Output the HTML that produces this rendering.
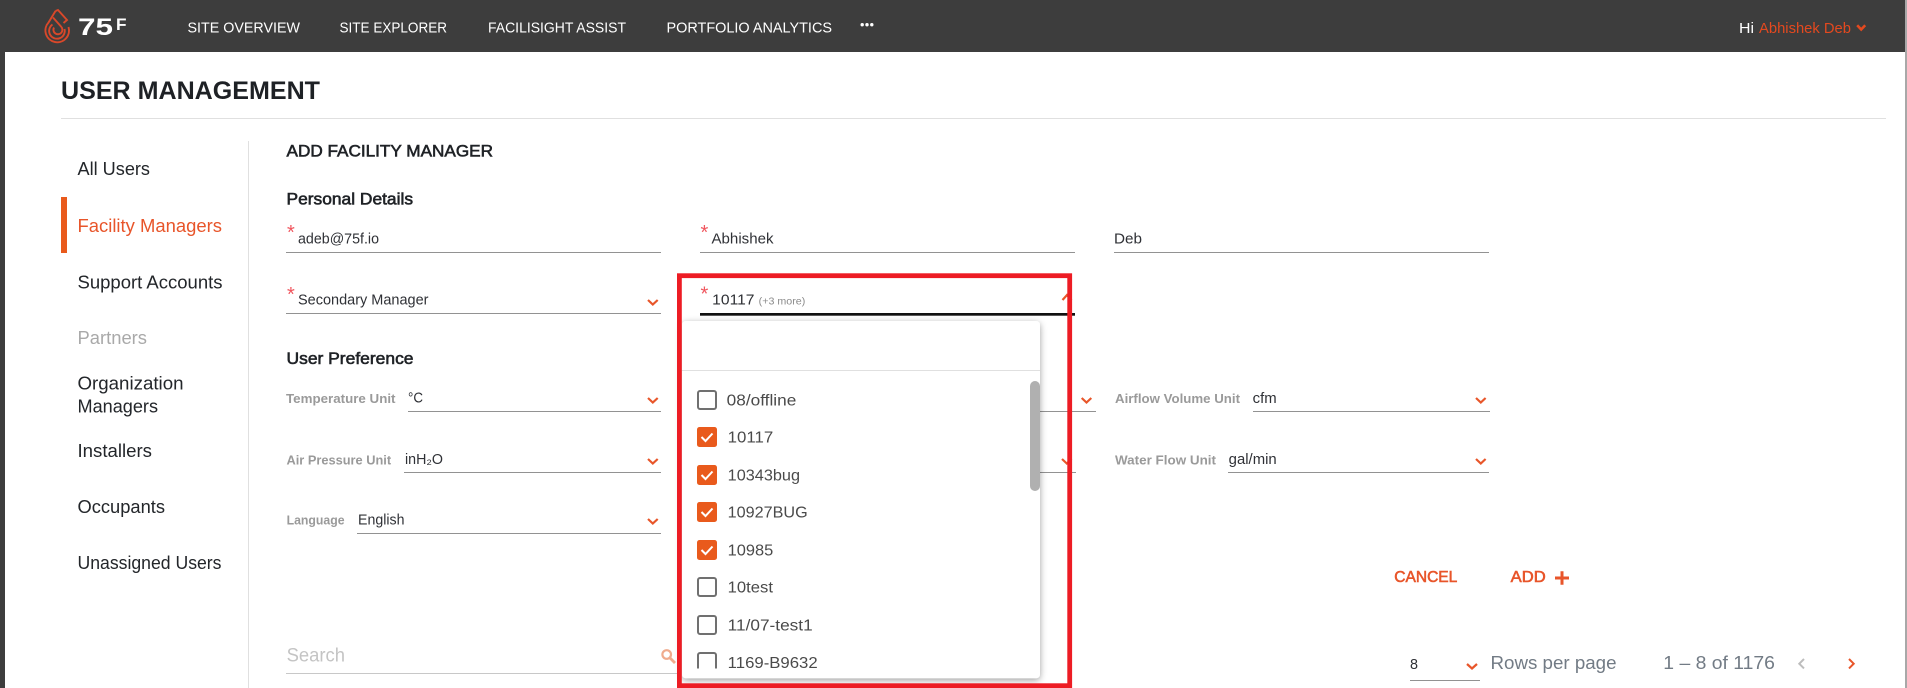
<!DOCTYPE html>
<html lang="en">
<head>
<meta charset="utf-8">
<title>User Management</title>
<style>
html,body{margin:0;padding:0;width:1907px;height:688px;overflow:hidden;background:#fff}
svg{display:block}
text{font-family:"Liberation Sans","Noto Sans CJK JP",sans-serif;white-space:pre}
.nav{font-size:15px;fill:#fff}
.side{font-size:18px;fill:#23262a}
.val{font-size:14.5px;fill:#2f3136}
.lab{font-size:13px;font-weight:bold;fill:#9a9a9a}
.h{font-size:16.5px;fill:#1f2226;stroke:#1f2226;stroke-width:.6}
.ast{font-size:20px;fill:#f0565e}
.opt{font-size:15.5px;fill:#4a4a4a}
.pg{font-size:18px;fill:#727b85}
.btn{font-size:15.5px;fill:#e8552a;stroke:#e8552a;stroke-width:.6}
.ch{fill:none;stroke:#e8562a;stroke-width:2.2}
.ln{fill:#929292}
.cb{fill:#fff;stroke:#707070;stroke-width:2}
.cbon{fill:#e95a1c}
.tick{fill:none;stroke:#fff;stroke-width:2}
</style>
</head>
<body>
<svg width="1907" height="688" viewBox="0 0 1907 688" xmlns="http://www.w3.org/2000/svg">
<defs>
<clipPath id="listclip"><rect x="682" y="371" width="358" height="297.5"/></clipPath>
<filter id="sh" x="-10%" y="-10%" width="120%" height="120%"><feDropShadow dx="0" dy="2" stdDeviation="3.5" flood-color="#000" flood-opacity=".38"/></filter>
</defs>

<!-- chrome -->
<rect x="0" y="0" width="1907" height="52" fill="#3d3d3d"/>
<rect x="0" y="0" width="5" height="688" fill="#3d3d3d"/>
<rect x="1905" y="0" width="2" height="688" fill="#a8a8a8"/>

<!-- logo -->
<g fill="none" stroke="#d9482a" stroke-width="1.9">
<path d="M55.500 11L48.500 22.500A11.800 11.800 0 1 0 68.500 27"/>
<path d="M55.500 11L58 10L67 20L63.500 23"/>
<path d="M52.500 24.500A7.800 7.800 0 1 0 64.500 29"/>
<path d="M53 17.500L61 26.500A4.500 4.500 0 1 1 54 27.500"/>
</g>
<text x="78" y="35" font-size="24" font-weight="bold" fill="#fff" textLength="35" lengthAdjust="spacingAndGlyphs">75</text>
<text x="116" y="30" font-size="17" font-weight="bold" fill="#fff" textLength="10.500" lengthAdjust="spacingAndGlyphs">F</text>

<!-- nav -->
<text class="nav" x="187.500" y="32.500" textLength="112.500" lengthAdjust="spacingAndGlyphs">SITE OVERVIEW</text>
<text class="nav" x="339.500" y="32.500" textLength="107.500" lengthAdjust="spacingAndGlyphs">SITE EXPLORER</text>
<text class="nav" x="488" y="32.500" textLength="138" lengthAdjust="spacingAndGlyphs">FACILISIGHT ASSIST</text>
<text class="nav" x="666.500" y="32.500" textLength="165.500" lengthAdjust="spacingAndGlyphs">PORTFOLIO ANALYTICS</text>
<circle cx="862.200" cy="24.700" r="1.700" fill="#fff"/><circle cx="867" cy="24.700" r="1.700" fill="#fff"/><circle cx="871.800" cy="24.700" r="1.700" fill="#fff"/>
<text class="nav" x="1739" y="33" textLength="15" lengthAdjust="spacingAndGlyphs">Hi</text>
<text x="1759" y="33" font-size="15" fill="#e4491f" textLength="92" lengthAdjust="spacingAndGlyphs">Abhishek Deb</text>
<polyline points="1857.200,25.200 1861.200,29.500 1865.200,25.200" fill="none" stroke="#e4491f" stroke-width="2.600"/>

<!-- title -->
<text x="61" y="99" font-size="25" font-weight="bold" fill="#1e2125" textLength="259" lengthAdjust="spacingAndGlyphs">USER MANAGEMENT</text>
<rect x="61" y="118" width="1825" height="1" fill="#e0e0e0"/>
<rect x="248" y="141" width="1" height="547" fill="#e0e0e0"/>

<!-- sidebar -->
<text class="side" x="77.500" y="175" textLength="72.500" lengthAdjust="spacingAndGlyphs">All Users</text>
<rect x="61" y="197" width="6" height="56" fill="#e95a1c"/>
<text class="side" x="77.500" y="232" style="fill:#e8552a" textLength="144.500" lengthAdjust="spacingAndGlyphs">Facility Managers</text>
<text class="side" x="77.500" y="288.500" textLength="145" lengthAdjust="spacingAndGlyphs">Support Accounts</text>
<text class="side" x="77.500" y="344" style="fill:#a9a9a9" textLength="69.500" lengthAdjust="spacingAndGlyphs">Partners</text>
<text class="side" x="77.500" y="389.500" textLength="106" lengthAdjust="spacingAndGlyphs">Organization</text>
<text class="side" x="77.500" y="412.500" textLength="80.500" lengthAdjust="spacingAndGlyphs">Managers</text>
<text class="side" x="77.500" y="457" textLength="74.500" lengthAdjust="spacingAndGlyphs">Installers</text>
<text class="side" x="77.500" y="513" textLength="87.500" lengthAdjust="spacingAndGlyphs">Occupants</text>
<text class="side" x="77.500" y="569" textLength="144" lengthAdjust="spacingAndGlyphs">Unassigned Users</text>

<!-- form headings -->
<text class="h" x="286.500" y="156.500" textLength="206.500" lengthAdjust="spacingAndGlyphs">ADD FACILITY MANAGER</text>
<text class="h" x="286.500" y="204.500" textLength="126.500" lengthAdjust="spacingAndGlyphs">Personal Details</text>
<text class="h" x="286.500" y="364" textLength="127" lengthAdjust="spacingAndGlyphs">User Preference</text>

<!-- personal details -->
<text class="ast" x="287" y="239">*</text>
<text class="val" x="298" y="243.500" textLength="81" lengthAdjust="spacingAndGlyphs">adeb@75f.io</text>
<rect class="ln" x="286" y="252" width="375" height="1"/>
<text class="ast" x="700.500" y="239">*</text>
<text class="val" x="711.500" y="243.500" textLength="62" lengthAdjust="spacingAndGlyphs">Abhishek</text>
<rect class="ln" x="700" y="252" width="375" height="1"/>
<text class="val" x="1114" y="243.500" textLength="28" lengthAdjust="spacingAndGlyphs">Deb</text>
<rect class="ln" x="1114" y="252" width="375" height="1"/>

<text class="ast" x="287" y="301">*</text>
<text class="val" x="298" y="304.500" textLength="130.500" lengthAdjust="spacingAndGlyphs">Secondary Manager</text>
<rect class="ln" x="286" y="313" width="375" height="1"/>
<polyline class="ch" points="648,300 652.800,304.500 657.700,300"/>

<text class="ast" x="700.500" y="300.500">*</text>
<text x="712.200" y="304.500" font-size="15" fill="#2f3136" textLength="42.300" lengthAdjust="spacingAndGlyphs">10117</text>
<text x="758.700" y="304.500" font-size="10.500" fill="#8a8a8a" textLength="46.600" lengthAdjust="spacingAndGlyphs">(+3 more)</text>
<rect x="700" y="313" width="375" height="2.700" fill="#111"/>
<polyline class="ch" points="1062.500,300 1067,295 1071.500,300"/>

<!-- preferences row 1 -->
<text class="lab" x="286" y="403" textLength="109.500" lengthAdjust="spacingAndGlyphs">Temperature Unit</text>
<text class="val" x="408" y="402.700" textLength="15" lengthAdjust="spacingAndGlyphs">°C</text>
<rect class="ln" x="408" y="411" width="253" height="1"/>
<polyline class="ch" points="648,398 652.800,402.500 657.700,398"/>
<rect class="ln" x="1000" y="411" width="96" height="1"/>
<polyline class="ch" points="1081.700,398 1086.500,402.500 1091.300,398"/>
<text class="lab" x="1115" y="403" textLength="125" lengthAdjust="spacingAndGlyphs">Airflow Volume Unit</text>
<text class="val" x="1252.700" y="403" textLength="24" lengthAdjust="spacingAndGlyphs">cfm</text>
<rect class="ln" x="1253" y="411" width="237" height="1"/>
<polyline class="ch" points="1476,398 1480.800,402.500 1485.600,398"/>

<!-- preferences row 2 -->
<text class="lab" x="286.500" y="464.500" textLength="104.600" lengthAdjust="spacingAndGlyphs">Air Pressure Unit</text>
<text class="val" x="405" y="464" textLength="38" lengthAdjust="spacingAndGlyphs">inH₂O</text>
<rect class="ln" x="404" y="472" width="257" height="1"/>
<polyline class="ch" points="648,459 652.800,463.500 657.700,459"/>
<rect class="ln" x="1000" y="472" width="76" height="1"/>
<polyline class="ch" points="1062,459 1066.800,463.500 1071.500,459"/>
<text class="lab" x="1115" y="464.500" textLength="101" lengthAdjust="spacingAndGlyphs">Water Flow Unit</text>
<text class="val" x="1228.700" y="464" textLength="48" lengthAdjust="spacingAndGlyphs">gal/min</text>
<rect class="ln" x="1228" y="472" width="261" height="1"/>
<polyline class="ch" points="1476,459 1480.800,463.500 1485.600,459"/>

<!-- language -->
<text class="lab" x="286.600" y="524.500" textLength="58" lengthAdjust="spacingAndGlyphs">Language</text>
<text class="val" x="358" y="524.500" textLength="46.500" lengthAdjust="spacingAndGlyphs">English</text>
<rect class="ln" x="357" y="533" width="304" height="1"/>
<polyline class="ch" points="648,519 652.800,523.500 657.700,519"/>

<!-- buttons -->
<text class="btn" x="1394.300" y="581.800" textLength="63" lengthAdjust="spacingAndGlyphs">CANCEL</text>
<text class="btn" x="1510.700" y="581.800" textLength="35" lengthAdjust="spacingAndGlyphs">ADD</text>
<path d="M1555 578H1569M1562 571.300V584.700" fill="none" stroke="#e8552a" stroke-width="3"/>

<!-- table search -->
<text x="286.600" y="661.700" font-size="19" fill="#c4c4c4" textLength="58.400" lengthAdjust="spacingAndGlyphs">Search</text>
<rect x="286" y="673" width="392" height="1" fill="#c8c8c8"/>
<circle cx="666.700" cy="654.500" r="4.300" fill="none" stroke="#f0ab8d" stroke-width="2.200"/>
<path d="M669.800 657.800L675 663" fill="none" stroke="#f0ab8d" stroke-width="2.800"/>

<!-- pagination -->
<text x="1410" y="669" font-size="14.500" fill="#2f3136" textLength="8" lengthAdjust="spacingAndGlyphs">8</text>
<rect class="ln" x="1410" y="680" width="70" height="1"/>
<polyline class="ch" points="1467,664 1472,668.500 1477,664"/>
<text class="pg" x="1490.500" y="669" textLength="126" lengthAdjust="spacingAndGlyphs">Rows per page</text>
<text class="pg" x="1663.300" y="669" textLength="111.600" lengthAdjust="spacingAndGlyphs">1 – 8 of 1176</text>
<polyline points="1804,659 1799.300,663.700 1804,668.400" fill="none" stroke="#bdbdbd" stroke-width="2"/>
<polyline points="1849,659 1853.700,663.700 1849,668.400" fill="none" stroke="#e8562a" stroke-width="2"/>

<!-- dropdown panel -->
<rect x="682" y="321" width="358" height="357.300" rx="4" fill="#fff" filter="url(#sh)"/>
<rect x="682" y="370" width="358" height="1" fill="#e0e0e0"/>
<rect x="1030" y="381" width="10" height="110" rx="5" fill="#b0b0b0"/>

<g clip-path="url(#listclip)">
<rect class="cb" x="698" y="391" width="18" height="18" rx="2"/>
<rect class="cbon" x="697" y="427" width="20" height="20" rx="2.500"/>
<polyline class="tick" points="701.500,437 705.500,441 712.500,433.500"/>
<rect class="cbon" x="697" y="465" width="20" height="20" rx="2.500"/>
<polyline class="tick" points="701.500,475 705.500,479 712.500,471.500"/>
<rect class="cbon" x="697" y="502" width="20" height="20" rx="2.500"/>
<polyline class="tick" points="701.500,512 705.500,516 712.500,508.500"/>
<rect class="cbon" x="697" y="540" width="20" height="20" rx="2.500"/>
<polyline class="tick" points="701.500,550 705.500,554 712.500,546.500"/>
<rect class="cb" x="698" y="578" width="18" height="18" rx="2"/>
<rect class="cb" x="698" y="616" width="18" height="18" rx="2"/>
<rect class="cb" x="698" y="653" width="18" height="30" rx="2"/>
</g>

<text class="opt" x="726.700" y="405.700" textLength="69.600" lengthAdjust="spacingAndGlyphs">08/offline</text>
<text class="opt" x="727.700" y="442.500" textLength="45.600" lengthAdjust="spacingAndGlyphs">10117</text>
<text class="opt" x="727.700" y="480.500" textLength="72.300" lengthAdjust="spacingAndGlyphs">10343bug</text>
<text class="opt" x="727.700" y="517.500" textLength="80" lengthAdjust="spacingAndGlyphs">10927BUG</text>
<text class="opt" x="727.700" y="555.500" textLength="45.600" lengthAdjust="spacingAndGlyphs">10985</text>
<text class="opt" x="727.700" y="592.500" textLength="45.300" lengthAdjust="spacingAndGlyphs">10test</text>
<text class="opt" x="727.700" y="630.500" textLength="85" lengthAdjust="spacingAndGlyphs">11/07-test1</text>
<text class="opt" x="727.700" y="668" textLength="90" lengthAdjust="spacingAndGlyphs">1169-B9632</text>

<!-- red annotation -->
<rect x="679.400" y="275.700" width="390.300" height="410" fill="none" stroke="#ed1c24" stroke-width="4.800"/>
</svg>
</body>
</html>
